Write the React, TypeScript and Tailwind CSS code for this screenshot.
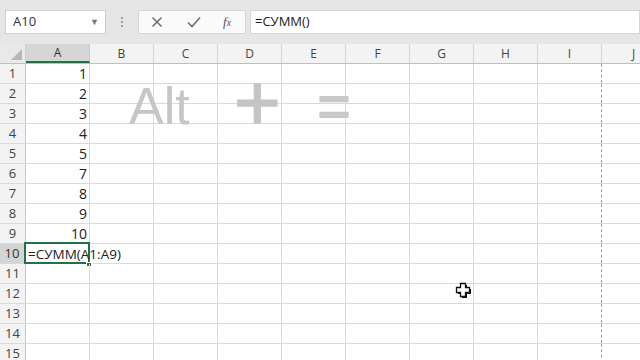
import React from 'react';

const COLS = ['A', 'B', 'C', 'D', 'E', 'F', 'G', 'H', 'I', 'J'];
const ROWS = Array.from({ length: 15 }, (_, i) => i + 1);

// значения в столбце A
const VALUES: Record<number, string> = {
  1: '1',
  2: '2',
  3: '3',
  4: '4',
  5: '5',
  6: '7',
  7: '8',
  8: '9',
  9: '10',
};

const font = "font-['Open_Sans','Liberation_Sans',sans-serif]";

const CrossCursor = () => (
  <svg width="20" height="20" viewBox="0 0 20 20" className="absolute left-[453px] top-[280px]">
    <path d="M7.5 3.5h5v4h4v5h-4v4h-5v-4h-4v-5h4z" fill="#111" transform="translate(1.5 1.5)" />
    <path d="M7.5 3.5h5v4h4v5h-4v4h-5v-4h-4v-5h4z" fill="#fff" stroke="#111" strokeWidth="1.3" />
  </svg>
);

export default function App() {
  return (
    <div className={`relative w-[640px] h-[360px] overflow-hidden bg-white ${font}`}>
      {/* строка формул */}
      <div className="flex h-[44px] items-center bg-[#e6e6e6] pl-[5px]">
        <div className="flex h-[24px] w-[101px] items-center justify-between border border-[#cfcfcf] bg-white pl-[7px] pr-[6px]">
          <span className="text-[13px] text-[#333]">A10</span>
          <span className="text-[9px] text-[#777]">▼</span>
        </div>
        <div className="flex w-[32px] flex-col items-center gap-[2px]">
          <span className="h-[2px] w-[2px] bg-[#a0a0a0]" />
          <span className="h-[2px] w-[2px] bg-[#a0a0a0]" />
          <span className="h-[2px] w-[2px] bg-[#a0a0a0]" />
        </div>
        <div className="flex h-[24px] w-[108px] items-center border border-[#d6d6d6] bg-[#fafafa]">
          <svg width="12" height="12" viewBox="0 0 12 12" className="ml-[12px]">
            <path d="M1.5 1.5l9 9M10.5 1.5l-9 9" stroke="#707070" strokeWidth="1.5" />
          </svg>
          <svg width="14" height="12" viewBox="0 0 14 12" className="ml-[24px]">
            <path d="M1 6.5l4 4 8-9" stroke="#707070" strokeWidth="1.6" fill="none" />
          </svg>
          <span className="ml-[22px] font-['Liberation_Serif',serif] text-[13px] italic text-[#555]">
            f<span className="text-[10px]">x</span>
          </span>
        </div>
        <div className="ml-[4px] flex h-[24px] flex-1 items-center border border-[#d6d6d6] bg-white pl-[4px]">
          <span className="text-[13px] text-[#222]">=СУММ()</span>
        </div>
      </div>

      {/* заголовки столбцов */}
      <div className="flex h-[20px] border-b border-[#bfbfbf] bg-[#f3f3f3]">
        <div className="relative w-[26px] shrink-0 border-r border-[#d0d0d0] bg-[#e9e9e9]">
          <div className="absolute bottom-[3px] right-[3px] h-0 w-0 border-b-[11px] border-l-[11px] border-b-[#b8b8b8] border-l-transparent" />
        </div>
        {COLS.map((c) => (
          <div
            key={c}
            className={
              c === 'A'
                ? 'flex w-[64px] shrink-0 items-center justify-center border-b-2 border-r border-b-[#217346] border-r-[#c8c8c8] bg-[#d6d6d6] text-[12px] text-[#333]'
                : 'flex w-[64px] shrink-0 items-center justify-center border-r border-[#d4d4d4] text-[12px] text-[#444]'
            }
          >
            {c}
          </div>
        ))}
      </div>

      {/* строки */}
      {ROWS.map((r) => (
        <div key={r} className="flex h-[20px] border-b border-[#dadada]">
          <div
            className={
              r === 10
                ? 'flex w-[26px] shrink-0 items-center justify-center border-r-2 border-[#217346] bg-[#d4d4d4] text-[13px] text-[#333]'
                : 'flex w-[26px] shrink-0 items-center justify-center border-r border-[#c6c6c6] bg-[#f3f3f3] text-[13px] text-[#444]'
            }
          >
            {r}
          </div>
          {COLS.map((c) => (
            <div
              key={c}
              className={
                c === 'I'
                  ? 'w-[64px] shrink-0 border-r border-dashed border-[#9a9a9a]'
                  : c === 'A'
                    ? 'relative flex w-[64px] shrink-0 items-center justify-end border-r border-[#dadada] pr-[2px] text-[14px] text-[#222]'
                    : 'w-[64px] shrink-0 border-r border-[#dadada]'
              }
            >
              {c === 'A' && VALUES[r]}
              {c === 'A' && r === 10 && (
                <>
                  <div className="absolute left-[-2px] top-[-2px] h-[22px] w-[66px] border-2 border-[#217346]" />
                  <div className="absolute bottom-[-4px] right-[-3px] h-[5px] w-[6px] border border-white bg-[#217346]" />
                  <span className="absolute left-[2px] top-0 z-10 whitespace-nowrap text-[13.5px] leading-[20px] text-[#222]">
                    =СУММ(A1:A9)
                  </span>
                </>
              )}
            </div>
          ))}
        </div>
      ))}

      {/* подсказка сочетания клавиш */}
      <span className="absolute left-[129px] top-[74px] font-['Liberation_Sans',sans-serif] text-[52px] leading-[64px] text-[#c6c6c6]">
        Alt
      </span>
      <span className="absolute left-[234px] top-[78px] font-['Liberation_Sans',sans-serif] text-[80px] leading-[50px] text-[#c4c4c4] [-webkit-text-stroke:1.5px_#c4c4c4]">
        +
      </span>
      <span className="absolute left-[317px] top-[77px] font-['Liberation_Sans',sans-serif] text-[58px] font-bold leading-[58px] text-[#c8c8c8]">
        =
      </span>

      <CrossCursor />
    </div>
  );
}
